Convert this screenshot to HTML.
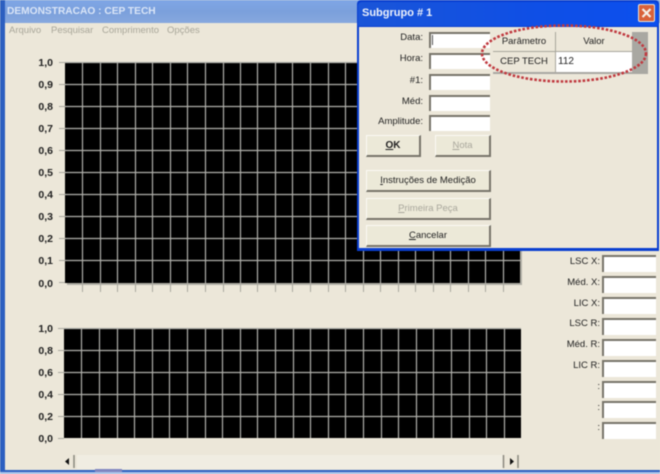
<!DOCTYPE html>
<html><head><meta charset="utf-8">
<style>
html,body{margin:0;padding:0;background:#ece9d8}
body{width:660px;height:474px;overflow:hidden;position:relative;font-family:"Liberation Sans",sans-serif}
#w{position:absolute;left:0;top:0;width:660px;height:474px;filter:blur(.45px)}
.a{position:absolute}
.t{position:absolute;font-size:9.5px;color:#222;white-space:nowrap}
.r{text-align:right}
.f{position:absolute;background:#fff;border-top:2px solid #77746a;border-left:2px solid #77746a;box-sizing:border-box}
.b{position:absolute;background:#ece9d8;border-right:2px solid #77746a;border-bottom:2px solid #77746a;border-top:1px solid #fbfaf5;border-left:1px solid #fbfaf5;box-sizing:border-box;text-align:center;font-size:9.5px;color:#222;white-space:nowrap}
.d{color:#a9a79c}
u{text-decoration:underline}
</style></head><body><div id="w">
<div class="a" style="left:0;top:0;width:660px;height:23px;background:linear-gradient(#7fa6e6,#7ba0dc 50%,#87a8de)"></div>
<div class="a" style="left:0;top:0;width:5px;height:474px;background:#2c5fc0"></div>
<div class="a" style="left:5px;top:23px;width:655px;height:447px;background:#ece7d9"></div>
<div class="a" style="left:0;top:470px;width:660px;height:2px;background:#2c5fc0"></div>
<div class="a" style="left:0;top:472px;width:660px;height:2px;background:#a9c2ea"></div>
<div class="a" style="left:95px;top:469px;width:27px;height:3px;background:#7f85c0"></div>
<div class="t" style="left:7px;top:3px;font-size:10.2px;font-weight:bold;color:#dbe6f7;line-height:17px">DEMONSTRACAO : CEP TECH</div>
<div class="t d" style="left:9px;top:25px;color:#a8a699">Arquivo</div>
<div class="t d" style="left:51px;top:25px;color:#a8a699">Pesquisar</div>
<div class="t d" style="left:102px;top:25px;color:#a8a699">Comprimento</div>
<div class="t d" style="left:167px;top:25px;color:#a8a699">Opções</div>

<svg class="a" style="left:0;top:0" width="660" height="474">
<g fill="none" stroke="#a9a89f" stroke-width="1">
<path d="M82.5 283v9M100.5 283v9M117.5 283v9M135.5 283v9M152.5 283v9M170.5 283v9M187.5 283v9M205.5 283v9M223.5 283v9M240.5 283v9M257.5 283v9M275.5 283v9M292.5 283v9M310.5 283v9M328.5 283v9M345.5 283v9M363.5 283v9M380.5 283v9M398.5 283v9M415.5 283v9M433.5 283v9M450.5 283v9M468.5 283v9M485.5 283v9M503.5 283v9"/>
<path d="M59 62.5h6M59 84.5h6M59 106.5h6M59 128.5h6M59 150.5h6M59 172.5h6M59 194.5h6M59 216.5h6M59 238.5h6M59 260.5h6M59 282.5h6M58 328.5h6M58 350.5h6M58 372.5h6M58 394.5h6M58 416.5h6M58 438.5h6"/>
</g>
<rect x="67" y="64" width="455" height="221" fill="#b0aea5"/>
<rect x="65" y="62" width="455" height="221" fill="#000"/>
<g fill="none" stroke="#b0b0ab" stroke-width="1.2">
<path d="M82.5 62v221M100.5 62v221M117.5 62v221M135.5 62v221M152.5 62v221M170.5 62v221M187.5 62v221M205.5 62v221M223.5 62v221M240.5 62v221M257.5 62v221M275.5 62v221M292.5 62v221M310.5 62v221M328.5 62v221M345.5 62v221M363.5 62v221M380.5 62v221M398.5 62v221M415.5 62v221M433.5 62v221M450.5 62v221M468.5 62v221M485.5 62v221M503.5 62v221"/>
<path d="M65 62.500h455M65 84.500h455M65 106.500h455M65 128.500h455M65 150.500h455M65 172.500h455M65 194.500h455M65 216.500h455M65 238.500h455M65 260.500h455"/>
</g>
<rect x="64" y="328" width="457" height="110" fill="#000"/>
<g fill="none" stroke="#b0b0ab" stroke-width="1.2">
<path d="M81.5 328v110M99.5 328v110M117.5 328v110M134.5 328v110M152.5 328v110M169.5 328v110M187.5 328v110M205.5 328v110M222.5 328v110M240.5 328v110M257.5 328v110M275.5 328v110M293.5 328v110M310.5 328v110M328.5 328v110M345.5 328v110M363.5 328v110M381.5 328v110M398.5 328v110M416.5 328v110M433.5 328v110M451.5 328v110M469.5 328v110M486.5 328v110M504.5 328v110"/>
<path d="M64 328.500h457M64 350.500h457M64 372.500h457M64 394.500h457M64 416.500h457"/>
</g>
<g font-family="Liberation Sans" font-size="10.5" font-weight="bold" fill="#222" text-anchor="end">
<text x="53" y="66">1,0</text><text x="53" y="88">0,9</text><text x="53" y="110">0,8</text><text x="53" y="132">0,7</text><text x="53" y="154">0,6</text><text x="53" y="176">0,5</text><text x="53" y="198">0,4</text><text x="53" y="220">0,3</text><text x="53" y="242">0,2</text><text x="53" y="264">0,1</text><text x="53" y="287">0,0</text>
<text x="53" y="332">1,0</text><text x="53" y="354">0,8</text><text x="53" y="376">0,6</text><text x="53" y="398">0,4</text><text x="53" y="420">0,2</text><text x="53" y="442">0,0</text>
</g>
<path d="M74 455v13" stroke="#8a887e" stroke-width="1.5"/>
<rect x="77" y="455" width="426" height="14" fill="#f0ede2"/>
<path d="M69 458v7l-4-3.500z" fill="#111"/>
<path d="M503.500 455v13M518 455v13" stroke="#8a887e" stroke-width="1.500"/>
<path d="M510 458v7l4-3.500z" fill="#111"/>
</svg>

<div class="t r" style="right:60px;top:255px;line-height:14px">LSC X:</div>
<div class="t r" style="right:60px;top:276px;line-height:14px">Méd. X:</div>
<div class="t r" style="right:60px;top:297px;line-height:14px">LIC X:</div>
<div class="t r" style="right:60px;top:317px;line-height:14px">LSC R:</div>
<div class="t r" style="right:60px;top:338px;line-height:14px">Méd. R:</div>
<div class="t r" style="right:60px;top:359px;line-height:14px">LIC R:</div>
<div class="t r" style="right:60px;top:380px;line-height:14px">:</div>
<div class="t r" style="right:60px;top:401px;line-height:14px">:</div>
<div class="t r" style="right:60px;top:421px;line-height:14px">:</div>
<div class="f" style="left:602px;top:255px;width:54px;height:17px"></div>
<div class="f" style="left:602px;top:276px;width:54px;height:17px"></div>
<div class="f" style="left:602px;top:297px;width:54px;height:17px"></div>
<div class="f" style="left:602px;top:318px;width:54px;height:17px"></div>
<div class="f" style="left:602px;top:339px;width:54px;height:17px"></div>
<div class="f" style="left:602px;top:360px;width:54px;height:17px"></div>
<div class="f" style="left:602px;top:381px;width:54px;height:17px"></div>
<div class="f" style="left:602px;top:401px;width:54px;height:17px"></div>
<div class="f" style="left:602px;top:422px;width:54px;height:17px"></div>

<!-- dialog -->
<div class="a" style="left:357px;top:0;width:302px;height:251px;background:#0a3fd0;border-radius:4px 4px 0 0"></div>
<div class="a" style="left:358px;top:2px;width:300px;height:24px;background:linear-gradient(90deg,#1a55d8,#0f4fe6 60%,#0c50ee);border-radius:4px 4px 0 0"></div>
<div class="a" style="left:359px;top:27px;width:298px;height:221px;background:#ece7d9"></div>
<div class="t" style="left:362px;top:6px;font-size:11px;font-weight:bold;color:#eef2fb;line-height:15px">Subgrupo # 1</div>
<div class="a" style="left:638px;top:4px;width:17px;height:18px;background:#d9623a;border:1px solid #e9e4da;box-sizing:border-box;border-radius:2px"></div>
<svg class="a" style="left:638px;top:4px" width="17" height="18"><path d="M4.500 5l8 8M12.500 5l-8 8" stroke="#f5efe8" stroke-width="2.200" fill="none"/></svg>

<div class="t r" style="right:237px;top:31px;line-height:13px">Data:</div>
<div class="t r" style="right:237px;top:52px;line-height:13px">Hora:</div>
<div class="t r" style="right:237px;top:74px;line-height:13px">#1:</div>
<div class="t r" style="right:237px;top:95px;line-height:13px">Méd:</div>
<div class="t r" style="right:237px;top:115px;line-height:13px">Amplitude:</div>
<div class="f" style="left:429px;top:32px;width:61px;height:16px"></div>
<div class="a" style="left:432px;top:35px;width:1px;height:10px;background:#555"></div>
<div class="f" style="left:429px;top:53px;width:61px;height:16px"></div>
<div class="f" style="left:429px;top:74px;width:61px;height:16px"></div>
<div class="f" style="left:429px;top:95px;width:61px;height:16px"></div>
<div class="f" style="left:429px;top:115px;width:61px;height:16px"></div>

<div class="a" style="left:493px;top:32px;width:155px;height:42px;background:#a9a8a2"></div>
<div class="a" style="left:493px;top:32px;width:63px;height:20px;background:#ece7d9;border-right:1px solid #a8a69c;border-bottom:1px solid #a8a69c;box-sizing:border-box;font-size:9.5px;text-align:center;line-height:19px;color:#222">Parâmetro</div>
<div class="a" style="left:556px;top:32px;width:76px;height:20px;background:#ece7d9;border-bottom:1px solid #a8a69c;box-sizing:border-box;font-size:9.5px;text-align:center;line-height:19px;color:#222">Valor</div>
<div class="a" style="left:493px;top:52px;width:63px;height:20px;background:#ece7d9;border-right:1px solid #a8a69c;box-sizing:border-box;font-size:9.5px;text-align:center;line-height:20px;color:#222">CEP TECH</div>
<div class="a" style="left:556px;top:52px;width:76px;height:20px;background:#fff;box-sizing:border-box;font-size:10px;padding-left:2px;line-height:20px;color:#222">112</div>
<svg class="a" style="left:470px;top:20px" width="190" height="70"><ellipse cx="94" cy="33.500" rx="82" ry="28" fill="none" stroke="#c0393f" stroke-width="2.600" stroke-dasharray="2.600 1.800"/></svg>

<div class="b" style="left:366px;top:135px;width:55px;height:22px;line-height:19px;font-size:10px;font-weight:bold"><u>O</u>K</div>
<div class="b d" style="left:435px;top:135px;width:56px;height:22px;line-height:19px"><u>N</u>ota</div>
<div class="b" style="left:366px;top:170px;width:125px;height:22px;line-height:19px"><u>I</u>nstruções de Medição</div>
<div class="b d" style="left:366px;top:198px;width:125px;height:22px;line-height:19px"><u>P</u>rimeira Peça</div>
<div class="b" style="left:366px;top:225px;width:125px;height:22px;line-height:19px"><u>C</u>ancelar</div>
</div></body></html>
